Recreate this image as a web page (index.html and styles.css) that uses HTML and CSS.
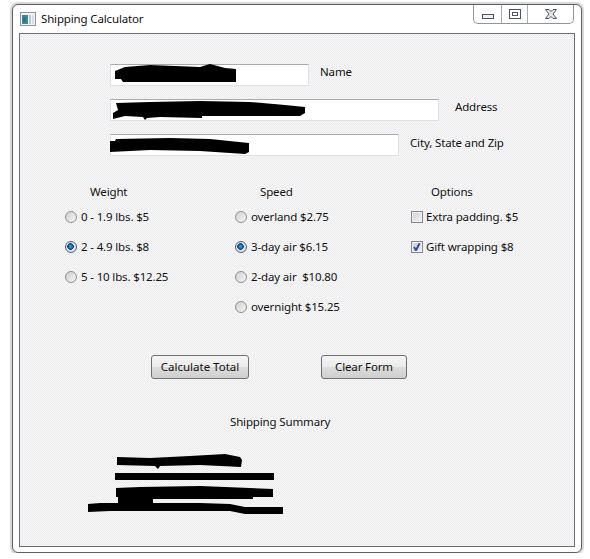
FILE: index.html
```html
<!DOCTYPE html>
<html lang="en">
<head>
    <meta charset="UTF-8">
    <meta name="viewport" content="width=device-width, initial-scale=1.0">
    <title>Shipping Calculator</title>
    <link rel="stylesheet" href="styles.css">
</head>
<body>
    <div class="window">
        <div class="titlebar">
            <svg class="app-icon" width="16" height="14" viewBox="0 0 16 14">
                <rect x="0.5" y="0.5" width="15" height="13" fill="#f2f4f6" stroke="#8a929c"/>
                <rect x="2" y="3" width="6" height="9" fill="#3f8a8c"/>
                <rect x="3" y="5" width="3" height="5" fill="#2f6f9f"/>
                <rect x="9" y="3" width="2" height="9" fill="#b9c6d6"/>
                <rect x="12" y="3" width="2" height="9" fill="#d5dde6"/>
            </svg>
            <span class="title">Shipping Calculator</span>
            <div class="controls">
                <div class="control ctl-min">
                    <svg width="12" height="5" viewBox="0 0 12 5"><rect x="0.5" y="0.5" width="11" height="4" fill="#eef0f3" stroke="#4d5660"/></svg>
                </div>
                <div class="control ctl-max">
                    <svg width="12" height="10" viewBox="0 0 12 10"><rect x="0.5" y="0.5" width="11" height="9" fill="none" stroke="#4d5660"/><rect x="3.5" y="3.5" width="5" height="3" fill="none" stroke="#4d5660"/></svg>
                </div>
                <div class="control ctl-close">
                    <svg width="12" height="10" viewBox="0 0 12 10"><path d="M0.5 0.5h3.5l2 2 2-2h3.5l-3.5 4.5 3.5 4.5h-3.5l-2-2-2 2h-3.5l3.5-4.5z" fill="#e4e7ea" stroke="#4d5660"/></svg>
                </div>
            </div>
        </div>

        <div class="panel">
            <div class="field"><input class="text-input w-name" type="text"><label class="label-name">Name</label></div>
            <div class="field"><input class="text-input w-address" type="text"><label class="label-address">Address</label></div>
            <div class="field"><input class="text-input w-city" type="text"><label class="label-city">City, State and Zip</label></div>

            <div class="choices">
                <div class="group group-weight">
                    <h3>Weight</h3>
                    <label class="choice"><input type="radio" name="weight">0 - 1.9 lbs. $5</label>
                    <label class="choice"><input type="radio" name="weight" checked>2 - 4.9 lbs. $8</label>
                    <label class="choice"><input type="radio" name="weight">5 - 10 lbs. $12.25</label>
                </div>
                <div class="group group-speed">
                    <h3>Speed</h3>
                    <label class="choice"><input type="radio" name="speed">overland $2.75</label>
                    <label class="choice"><input type="radio" name="speed" checked>3-day air $6.15</label>
                    <label class="choice"><input type="radio" name="speed">2-day air&nbsp; $10.80</label>
                    <label class="choice"><input type="radio" name="speed">overnight $15.25</label>
                </div>
                <div class="group group-options">
                    <h3>Options</h3>
                    <label class="choice"><input type="checkbox">Extra padding. $5</label>
                    <label class="choice"><input type="checkbox" checked>Gift wrapping $8</label>
                </div>
            </div>

            <div class="buttons">
                <button class="btn-calc" type="button">Calculate Total</button>
                <button class="btn-clear" type="button">Clear Form</button>
            </div>

            <div class="summary">Shipping Summary</div>

            <!-- black marker over the personal data -->
            <svg class="redactions" width="590" height="559" viewBox="0 0 590 559">
                <path d="M115 71L125 67 150 65 200 67 210 64 225 68 236 69V82H123L121 79H115Z"/>
                <path d="M116 103L150 102 200 101 250 102 285 105 305 107V113L300 116H202V118L160 117 147 118 145 120 143 117 125 116 113 119V113L118 110Z"/>
                <path d="M110 141H115L116 139 170 138 210 139 249 143V152L245 154 200 151 150 150 110 152Z"/>
                <path d="M117 457L150 458 190 456 225 454 240 457 242 460 241 467 200 465 160 466 158 469 155 466 117 465Z"/>
                <path d="M115 473H274V480H115Z"/>
                <path d="M116 488L140 487 200 486 250 488 273 489V497H253V499H153V497H116Z"/>
                <path d="M118 497H153V505H118Z"/>
                <path d="M88 504L100 503 200 503 230 504 245 507 283 507V514H245L230 511 200 511H110L88 512Z"/>
            </svg>
        </div>
    </div>
</body>
</html>
```
FILE: styles.css
```css
html, body {
    margin: 0;
    padding: 0;
    background: white;
}
body {
    font-family: "Noto Sans", sans-serif;
    font-size: 11.5px;
    letter-spacing: -0.15px;
    color: #111;
}
.window {
    position: relative;
    box-sizing: border-box;
    width: 570px;
    height: 549px;
    margin: 4px 0 0 12px;
    padding: 0 6px;
    background: white;
    border: 1px solid #5c6066;
    border-radius: 6px;
    box-shadow: 0 0 0 2px #d8d8d8;
}
.titlebar {
    display: flex;
    align-items: flex-start;
    height: 28px;
}
.app-icon {
    margin: 7px 5px 0 1px;
}
.title {
    margin-top: 5px;
    line-height: 18px;
}
.controls {
    display: flex;
    height: 19px;
    margin: 0 1px 0 auto;
    box-sizing: border-box;
    border: 1px solid #8f959c;
    border-top: none;
    border-radius: 0 0 5px 5px;
}
.control {
    display: flex;
    align-items: center;
    justify-content: center;
    border-left: 1px solid #a5abb2;
}
.ctl-min {
    width: 27px;
    border-left: none;
}
.ctl-min svg {
    margin-top: 5px;
}
.ctl-max {
    width: 25px;
}
.ctl-close {
    width: 45px;
}
.panel {
    box-sizing: border-box;
    height: 514px;
    padding: 30px 0 0 90px;
    border: 1px solid #6a6e74;
    background-color: #f1f1f1;
    background-image: conic-gradient(#f8f6f8 25%, #ebeded 0 50%, #f8f6f8 0 75%, #ebeded 0);
    background-size: 2px 2px;
}
.field {
    display: flex;
    align-items: center;
    height: 22px;
    margin-bottom: 13px;
}
.field label {
    margin-left: 11px;
}
.field .label-name {
    margin-top: -8px;
}
.field .label-address {
    margin: -7px 0 0 16px;
}
.field .label-city {
    margin-top: -5px;
}
.text-input {
    box-sizing: border-box;
    height: 22px;
    padding: 0 4px;
    background: white;
    border: 1px solid #dde1e6;
    border-top-color: #a6abb1;
    outline: none;
}
.w-name {
    width: 199px;
}
.w-address {
    width: 329px;
}
.w-city {
    width: 289px;
}
.choices {
    display: grid;
    grid-template-columns: 170px 176px 1fr;
    margin: 26px 0 0 -45px;
}
.group h3 {
    margin: 0;
    font-size: 11.5px;
    font-weight: normal;
    line-height: 20px;
}
.group-weight h3,
.group-speed h3 {
    padding-left: 25px;
}
.group-options h3 {
    padding-left: 20px;
}
.choice {
    display: flex;
    align-items: center;
    box-sizing: border-box;
    height: 30px;
    padding-bottom: 2px;
}
.choice input {
    appearance: none;
    box-sizing: border-box;
    width: 12px;
    height: 12px;
    margin: 2px 4px 0 0;
    background: linear-gradient(135deg, #cfcfcf, #f6f6f6);
    border: 1px solid #8e8f8f;
}
.choice input[type="radio"] {
    border-radius: 50%;
}
.choice input[type="radio"]:checked {
    background: radial-gradient(circle at 45% 45%, #3ba4e0 0, #0d5c9c 2.5px, #0d3f6a 3px, #dfe2e5 3.6px);
    border-color: #5a6068;
}
.choice input[type="checkbox"] {
    margin-right: 3px;
    border-color: #84878b;
    box-shadow: inset 0 0 0 1px #f2f2f2;
}
.choice input[type="checkbox"]:checked {
    background: no-repeat center url("data:image/svg+xml,%3Csvg xmlns='http://www.w3.org/2000/svg' width='10' height='10'%3E%3Cpath d='M2 5L4 8.2 7.6 1.2' fill='none' stroke='%23344f9a' stroke-width='2'/%3E%3C/svg%3E"), linear-gradient(135deg, #c4ccdc, #f0f2f6);
}
.buttons {
    display: flex;
    gap: 72px;
    margin: 33px 0 0 41px;
}
.buttons button {
    box-sizing: border-box;
    height: 24px;
    padding: 0 0 2px;
    font-family: inherit;
    font-size: 11.5px;
    color: #111;
    background: linear-gradient(#f4f4f4 0, #ebebeb 48%, #dcdcdc 50%, #cfcfcf 100%);
    border: 1px solid #707070;
    border-radius: 3px;
    cursor: pointer;
}
.btn-calc {
    width: 98px;
    letter-spacing: 0;
}
.btn-clear {
    width: 86px;
    letter-spacing: -0.15px;
}
.summary {
    margin: 33px 0 0 120px;
    line-height: 20px;
}
.redactions {
    position: absolute;
    left: -13px;
    top: -5px;
    fill: black;
    pointer-events: none;
}
```
